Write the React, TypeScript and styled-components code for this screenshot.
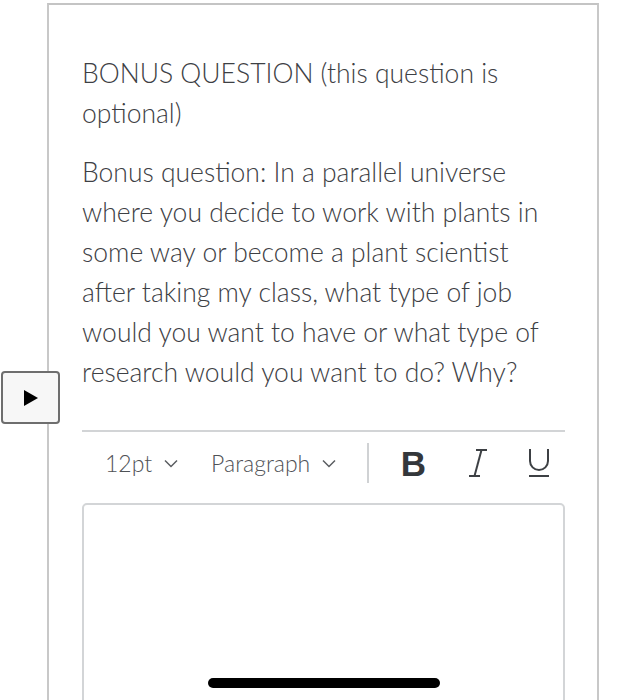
import React from 'react'
import styled, { createGlobalStyle } from 'styled-components'

const GlobalStyle = createGlobalStyle`
  html, body {
    margin: 0;
    padding: 0;
    background: #ffffff;
    overflow: hidden;
  }
  body {
    font-family: Lato, "Open Sans", "Liberation Sans", sans-serif;
    color: #3b3e42;
  }
`

const Screen = styled.div`
  position: relative;
  width: 642px;
  height: 700px;
  overflow: hidden;
  background: #ffffff;
`

const Panel = styled.div`
  margin: 3px 0 0 47px;
  width: 552px;
  height: 720px;
  box-sizing: border-box;
  border-top: 2px solid #c4c4c4;
  border-left: 2px solid #c8c8c8;
  border-right: 2px solid #c8c8c8;
  padding: 48px 32px 0 33px;
  display: flex;
  flex-direction: column;
`

const Heading = styled.p`
  margin: 0;
  font-size: 26.5px;
  line-height: 40px;
  font-weight: 300;
  color: #3d4044;
`

const Body = styled.p`
  margin: 19px 0 0 0;
  font-size: 26.5px;
  line-height: 40px;
  font-weight: 300;
  color: #3d4044;
`

const Rule = styled.div`
  margin-top: 38px;
  height: 2px;
  background: #d2d4d6;
`

const Toolbar = styled.div`
  display: flex;
  align-items: center;
  height: 54px;
  margin-top: 7px;
  padding-left: 23px;
`

const Dropdown = styled.div<{ $gap: number }>`
  display: flex;
  align-items: center;
  gap: 12px;
  font-size: 23px;
  font-weight: 300;
  color: #4f5256;
  margin-right: ${(p) => p.$gap}px;
`

const Separator = styled.div`
  width: 2px;
  height: 40px;
  background: #d0d2d4;
  margin-right: 31px;
`

const FormatButton = styled.div<{ $gap?: number }>`
  display: flex;
  align-items: center;
  justify-content: center;
  width: 26px;
  height: 34px;
  margin-right: ${(p) => p.$gap ?? 0}px;
  color: #3d4044;
`

const BoldGlyph = styled.span`
  font-family: "Liberation Sans", Arial, sans-serif;
  font-weight: 700;
  font-size: 35px;
  line-height: 1;
  color: #34373b;
`

const Editor = styled.div`
  margin-top: 16px;
  height: 240px;
  border: 2px solid #d3d5d7;
  border-radius: 5px;
`

const PlayButton = styled.button`
  position: absolute;
  left: 1px;
  top: 371px;
  width: 59px;
  height: 53px;
  box-sizing: border-box;
  border: 2px solid #6e6e6e;
  border-radius: 4px;
  background: #f7f7f7;
  display: flex;
  align-items: center;
  justify-content: center;
  padding: 0;
`

const HomeIndicator = styled.div`
  position: absolute;
  left: 208px;
  top: 678px;
  width: 232px;
  height: 10px;
  border-radius: 5px;
  background: #000000;
`

const Chevron = () => (
  <svg width="14" height="9" viewBox="0 0 14 9" fill="none">
    <path d="M1 1.5 L7 7.5 L13 1.5" stroke="#5a5d61" strokeWidth="1.5" />
  </svg>
)

const ItalicIcon = () => (
  <svg width="22" height="30" viewBox="0 0 22 30" fill="none" stroke="#3d4044" strokeWidth="2">
    <path d="M9 2 H20" />
    <path d="M2 28 H13" />
    <path d="M14.5 2 L7.5 28" />
  </svg>
)

const UnderlineIcon = () => (
  <svg width="24" height="30" viewBox="0 0 24 30" fill="none" stroke="#3d4044" strokeWidth="2">
    <path d="M3 1 V13 a9 9 0 0 0 18 0 V1" />
    <path d="M2 28 H22" />
  </svg>
)

const PlayIcon = () => (
  <svg width="16" height="18" viewBox="0 0 16 18">
    <path d="M1 1 L15 9 L1 17 Z" fill="#000000" />
  </svg>
)

export default function App() {
  return (
    <>
      <GlobalStyle />
      <Screen>
        <Panel>
          <Heading>
            BONUS QUESTION (this question is
            <br />
            optional)
          </Heading>
          <Body>
            Bonus question: In a parallel universe
            <br />
            where you decide to work with plants in
            <br />
            some way or become a plant scientist
            <br />
            after taking my class, what type of job
            <br />
            would you want to have or what type of
            <br />
            research would you want to do? Why?
          </Body>
          <Rule />
          <Toolbar>
            <Dropdown $gap={33}>
              12pt <Chevron />
            </Dropdown>
            <Dropdown $gap={31}>
              Paragraph <Chevron />
            </Dropdown>
            <Separator />
            <FormatButton $gap={39}>
              <BoldGlyph>B</BoldGlyph>
            </FormatButton>
            <FormatButton $gap={35}>
              <ItalicIcon />
            </FormatButton>
            <FormatButton>
              <UnderlineIcon />
            </FormatButton>
          </Toolbar>
          <Editor />
        </Panel>
        <PlayButton aria-label="Play">
          <PlayIcon />
        </PlayButton>
        <HomeIndicator />
      </Screen>
    </>
  )
}
